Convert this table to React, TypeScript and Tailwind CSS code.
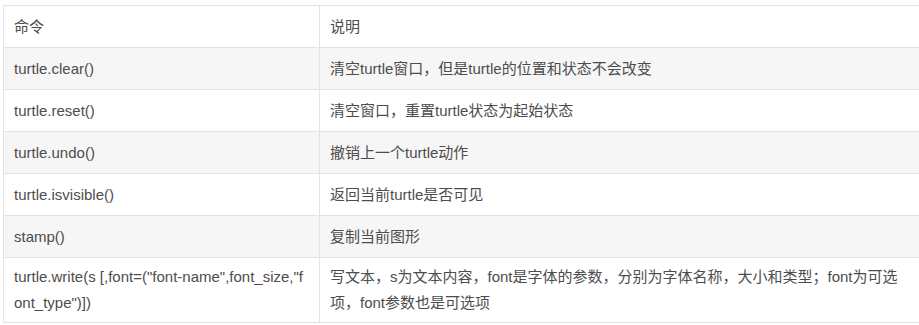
const rows: [string, React.ReactNode][] = [
  ['turtle.clear()', '清空turtle窗口，但是turtle的位置和状态不会改变'],
  ['turtle.reset()', '清空窗口，重置turtle状态为起始状态'],
  ['turtle.undo()', '撤销上一个turtle动作'],
  ['turtle.isvisible()', '返回当前turtle是否可见'],
  ['stamp()', '复制当前图形'],
];

export default function App() {
  return (
    <div className="w-[919px] h-[325px] overflow-hidden bg-white pt-[5px] pl-[3px]">
      <table
        className="w-[930px] border-collapse text-[15px] leading-[25px] text-[#4d4d4d]"
        style={{ fontFamily: '"Liberation Sans", "Noto Sans CJK SC", sans-serif' }}
      >
        <tbody>
          <tr className="bg-white">
            <td className="w-[316px] border border-[#e3e3e3] px-[10px] py-[8px]">命令</td>
            <td className="border border-[#e3e3e3] px-[10px] py-[8px]">说明</td>
          </tr>
          {rows.map(([cmd, desc], i) => (
            <tr key={cmd} className={i % 2 === 0 ? 'bg-[#f6f6f6]' : 'bg-white'}>
              <td className="border border-[#e3e3e3] px-[10px] py-[8px]">{cmd}</td>
              <td className="border border-[#e3e3e3] px-[10px] py-[8px]">{desc}</td>
            </tr>
          ))}
          <tr className="bg-white">
            <td className="border border-[#e3e3e3] px-[10px] py-[6px] leading-[26px]">
              turtle.write(s [,font=("font-name",font_size,"f
              <br />
              ont_type")])
            </td>
            <td className="border border-[#e3e3e3] px-[10px] py-[6px] leading-[26px]">
              写文本，s为文本内容，font是字体的参数，分别为字体名称，大小和类型；font为可选
              <br />
              项，font参数也是可选项
            </td>
          </tr>
        </tbody>
      </table>
    </div>
  );
}
